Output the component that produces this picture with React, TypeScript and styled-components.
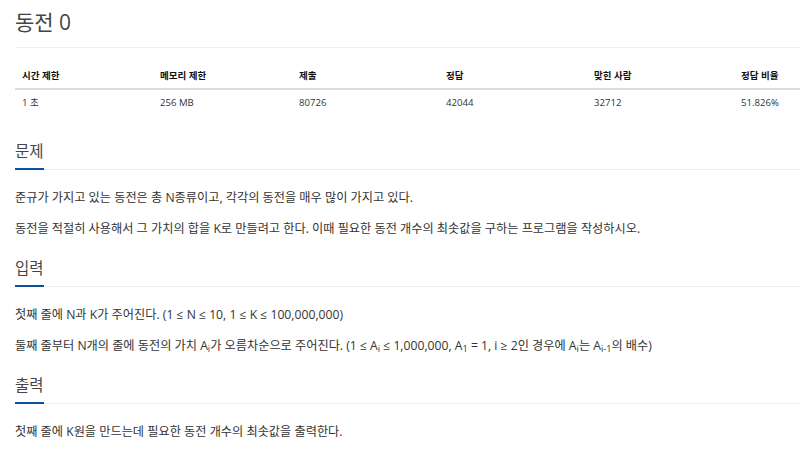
import React from 'react';
import styled, { createGlobalStyle } from 'styled-components';

const GlobalStyle = createGlobalStyle`
  html, body {
    margin: 0;
    padding: 0;
    background: #fff;
  }
  body {
    font-family: 'Open Sans', 'Noto Sans CJK KR', sans-serif;
    color: #333;
  }
`;

interface Stat {
  label: string;
  value: string;
}

const stats: Stat[] = [
  { label: '시간 제한', value: '1 초' },
  { label: '메모리 제한', value: '256 MB' },
  { label: '제출', value: '80726' },
  { label: '정답', value: '42044' },
  { label: '맞힌 사람', value: '32712' },
  { label: '정답 비율', value: '51.826%' },
];

function Section({ title, children }: { title: string; children: React.ReactNode }) {
  return (
    <SectionWrap>
      <HeadlineWrap>
        <Headline>{title}</Headline>
      </HeadlineWrap>
      <SectionBody>{children}</SectionBody>
    </SectionWrap>
  );
}

export default function App() {
  return (
    <>
      <GlobalStyle />
      <Page>
        <TitleBar>
          <Title>동전 0</Title>
        </TitleBar>

        <StatTable>
          {stats.map((s) => (
            <HeadCell key={s.label}>{s.label}</HeadCell>
          ))}
          {stats.map((s) => (
            <BodyCell key={s.label}>{s.value}</BodyCell>
          ))}
        </StatTable>

        <Section title="문제">
          <Para>준규가 가지고 있는 동전은 총 N종류이고, 각각의 동전을 매우 많이 가지고 있다.</Para>
          <Para>동전을 적절히 사용해서 그 가치의 합을 K로 만들려고 한다. 이때 필요한 동전 개수의 최솟값을 구하는 프로그램을 작성하시오.</Para>
        </Section>

        <Section title="입력">
          <Para>첫째 줄에 N과 K가 주어진다. (1 ≤ N ≤ 10, 1 ≤ K ≤ 100,000,000)</Para>
          <Para>
            둘째 줄부터 N개의 줄에 동전의 가치 A<sub>i</sub>가 오름차순으로 주어진다. (1 ≤ A<sub>i</sub> ≤ 1,000,000, A
            <sub>1</sub> = 1, i ≥ 2인 경우에 A<sub>i</sub>는 A<sub>i-1</sub>의 배수)
          </Para>
        </Section>

        <Section title="출력">
          <Para>첫째 줄에 K원을 만드는데 필요한 동전 개수의 최솟값을 출력한다.</Para>
        </Section>
      </Page>
    </>
  );
}

const Page = styled.div`
  display: flex;
  flex-direction: column;
  padding-left: 15px;
  width: 785px;
`;

const TitleBar = styled.div`
  padding: 7px 0 10px;
  border-bottom: 1px solid #eee;
`;

const Title = styled.h1`
  margin: 0;
  font-size: 21px;
  line-height: 30px;
  font-weight: 400;
  color: #444;
`;

const StatTable = styled.div`
  display: grid;
  grid-template-columns: 138px 139px 147px 148px 147px 1fr;
  margin: 12px 0 20px;
  font-size: 9.6px;
`;

const HeadCell = styled.div`
  padding: 8px 7px 4px;
  line-height: 16px;
  font-weight: 700;
  font-size: 9.5px;
  color: #111;
  border-bottom: 2px solid #ddd;
`;

const BodyCell = styled.div`
  padding: 5px 7px 8px;
  line-height: 16px;
  color: #333;
`;

const SectionWrap = styled.section`
  & + & {
    margin-top: 18px;
  }
`;

const HeadlineWrap = styled.div`
  border-bottom: 1px solid #eee;
`;

const Headline = styled.h2`
  display: inline-block;
  margin: 0 0 -1px;
  padding-bottom: 5px;
  font-size: 15.5px;
  line-height: 24px;
  font-weight: 400;
  color: #444;
  border-bottom: 2px solid #0d4fa0;
`;

const SectionBody = styled.div`
  display: flex;
  flex-direction: column;
  gap: 13px;
  padding-top: 19px;
`;

const Para = styled.p`
  margin: 0;
  font-size: 12.2px;
  line-height: 18px;
  color: #333;

  sub {
    font-size: 75%;
    line-height: 0;
    vertical-align: -0.25em;
  }
`;
